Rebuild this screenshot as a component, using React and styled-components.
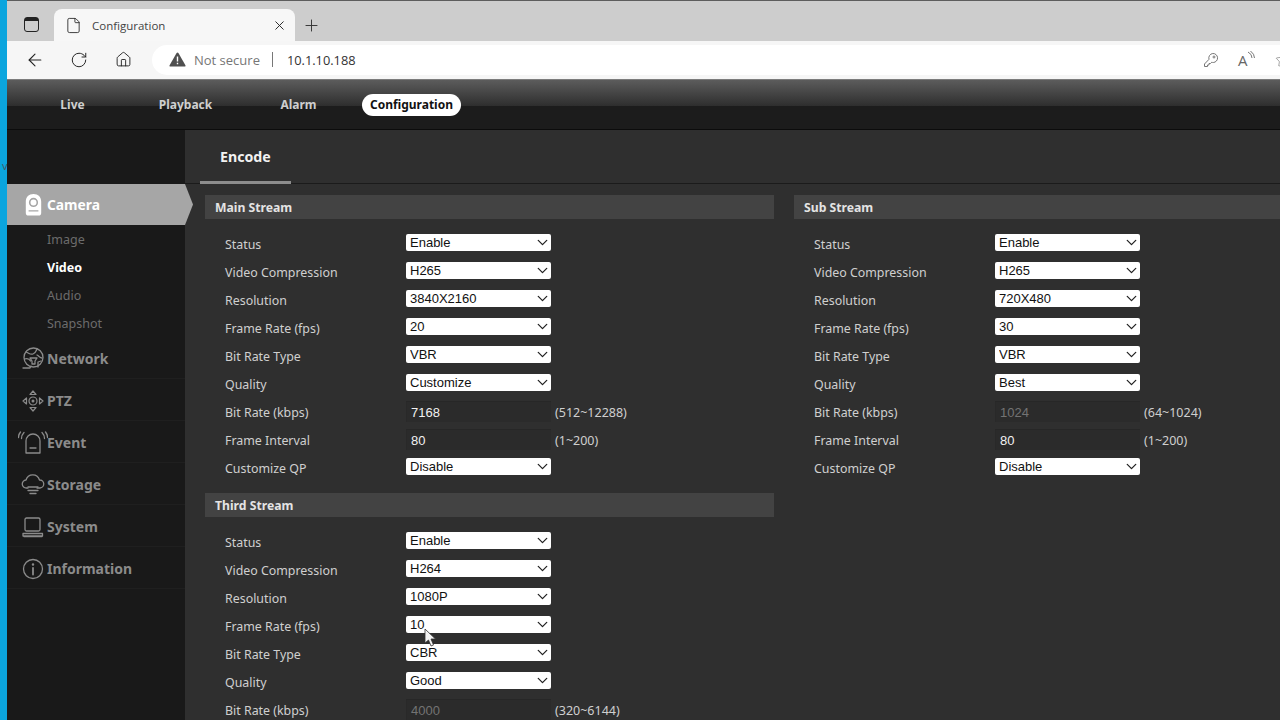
import React from "react";
import styled, { createGlobalStyle } from "styled-components";
import { ArrowLeft, RotateCw, Home, File, X, Plus, Star, ChevronDown } from "lucide-react";

const Global = createGlobalStyle`
  html, body { margin: 0; padding: 0; height: 720px; overflow: hidden; background: #2f2f2f; }
  #root { height: 720px; }
  * { box-sizing: border-box; }
`;

const ui = `"Noto Sans", "Open Sans", sans-serif`;

const Page = styled.div`
  position: relative;
  display: flex;
  width: 1280px;
  height: 720px;
  overflow: hidden;
  font-family: ${ui};
`;
const Strip = styled.div`
  position: relative;
  flex: 0 0 7px;
  background: #0ba5de;
`;
const StripMark = styled.span`
  position: absolute;
  left: 2px;
  top: 158px;
  font-size: 11px;
  color: #3d5d6b;
`;
const Main = styled.div`
  flex: 1;
  min-width: 0;
  display: flex;
  flex-direction: column;
`;
const TabStrip = styled.div`
  flex: 0 0 41px;
  display: flex;
  align-items: flex-end;
  background: #cdcdcd;
  border-top: 1px solid #5d5d5d;
  padding-left: 47px;
  position: relative;
`;
const TabActions = styled.div`
  position: absolute;
  left: 17px;
  top: 16px;
  width: 15px;
  height: 15px;
  border: 1.4px solid #222;
  border-radius: 3px;
  &::before {
    content: "";
    display: block;
    height: 3px;
    background: #222;
  }
`;
const Tab = styled.div`
  width: 241px;
  height: 32px;
  background: #f7f7f7;
  border-radius: 8px 8px 0 0;
  display: flex;
  align-items: center;
  padding: 0 8px 0 11px;
  color: #444;
  font-size: 11.5px;
  font-family: "Open Sans", sans-serif;
  svg { flex: none; }
`;
const TabTitle = styled.span`
  flex: 1;
  margin-left: 10px;
`;
const NewTab = styled.div`
  margin-left: 7px;
  height: 32px;
  display: flex;
  align-items: center;
  color: #333;
`;
const Toolbar = styled.div`
  flex: 0 0 39px;
  display: flex;
  align-items: center;
  background: #f6f6f6;
  border-bottom: 1px solid #7c7c7c;
  padding: 0 0 1px 6px;
`;
const ToolButton = styled.div`
  flex: 0 0 44px;
  display: flex;
  align-items: center;
  justify-content: center;
  color: #222;
`;
const Address = styled.div`
  flex: 1;
  height: 30px;
  margin-left: 7px;
  background: #fff;
  border-radius: 15px 0 0 15px;
  display: flex;
  align-items: center;
  padding-left: 17px;
  position: relative;
  font-family: "Open Sans", sans-serif;
  font-size: 13px;
`;
const NotSecure = styled.span`
  color: #767676;
  margin-left: 8px;
`;
const Divider = styled.span`
  width: 1px;
  height: 15px;
  background: #777;
  margin: 0 14px 0 12px;
`;
const Url = styled.span`
  color: #333;
  font-size: 12.8px;
`;
const RightIcons = styled.div`
  position: absolute;
  left: 1051px;
  top: 0;
  height: 30px;
  display: flex;
  align-items: center;
  gap: 19px;
  color: #777;
`;
const ReadAloud = styled.div`
  position: relative;
  width: 18px;
  font-size: 15px;
  line-height: 30px;
  color: #666;
  svg { position: absolute; left: 9px; top: 6px; }
`;
const Nav = styled.nav`
  flex: 0 0 50px;
  display: flex;
  align-items: center;
  padding: 0 0 0 9px;
  background: linear-gradient(#5c5c5c 0, #2f2f2f 52%, #1c1c1c 54%, #1c1c1c 100%);
  border-bottom: 1px solid #0c0c0c;
`;
const NavItem = styled.div`
  width: 113px;
  display: flex;
  justify-content: center;
`;
const NavLabel = styled.span`
  height: 22px;
  line-height: 22px;
  padding: 0 8px;
  border-radius: 11px;
  font-size: 12px;
  font-weight: 700;
  color: ${(p) => (p.$active ? "#111" : "#cfcfcf")};
  background: ${(p) => (p.$active ? "#fff" : "transparent")};
`;
const Body = styled.div`
  flex: 1;
  min-height: 0;
  display: flex;
`;
const Sidebar = styled.aside`
  flex: 0 0 178px;
  width: 178px;
  min-width: 0;
  background: #191919;
  padding-top: 54px;
  position: relative;
  z-index: 1;
`;
const ActiveGroup = styled.div`
  width: 186px;
  height: 41px;
  background: #a6a6a6;
  clip-path: polygon(0 0, 178px 0, 186px 50%, 178px 100%, 0 100%);
  display: flex;
  align-items: center;
  padding-left: 12px;
  color: #fff;
  font-size: 13.8px;
  font-weight: 700;
`;
const GroupIcon = styled.span`
  flex: 0 0 28px;
  min-width: 0;
  display: flex;
  align-items: center;
  justify-content: center;
  svg { flex: none; }
`;
const SubList = styled.div`
  padding: 0 0 0 40px;
`;
const SubItem = styled.div`
  height: 28px;
  line-height: 30px;
  font-size: 12.5px;
  color: ${(p) => (p.$active ? "#fff" : "#6c6c6c")};
  font-weight: ${(p) => (p.$active ? 700 : 400)};
`;
const Group = styled.div`
  height: 42px;
  display: flex;
  align-items: center;
  padding: 2px 0 0 12px;
  color: #8b8b8b;
  font-size: 14px;
  font-weight: 700;
  border-bottom: 1px solid #1f1f1f;
`;
const Content = styled.main`
  flex: 1;
  min-width: 0;
  background: #2f2f2f;
  overflow: hidden;
`;
const TabBar = styled.div`
  height: 54px;
  padding-left: 15px;
  border-bottom: 1px solid #1b1b1b;
  display: flex;
`;
const EncodeTab = styled.div`
  width: 91px;
  height: 54px;
  padding: 16px 0 0 20px;
  border-bottom: 3px solid #8d8d8d;
  color: #f2f2f2;
  font-size: 14.2px;
  font-weight: 700;
  line-height: 22px;
`;
const Columns = styled.div`
  display: grid;
  grid-template-columns: 569px 569px;
  column-gap: 20px;
  padding: 11px 0 0 20px;
  align-items: start;
`;
const Stream = styled.section`
  margin-bottom: 12px;
`;
const StreamHeader = styled.h3`
  margin: 0 0 10px;
  height: 24px;
  line-height: 26px;
  padding-left: 10px;
  background: #434343;
  color: #e4e4e4;
  font-size: 12.2px;
  font-weight: 700;
`;
const Row = styled.div`
  height: 28px;
  display: flex;
  align-items: center;
`;
const Label = styled.label`
  flex: 0 0 201px;
  padding: 4px 0 0 20px;
  color: #cfcfcf;
  font-size: 12.4px;
  line-height: 16px;
`;
const SelectBox = styled.div`
  position: relative;
  width: 145px;
  height: 17px;
  margin-bottom: 2px;
  svg {
    position: absolute;
    right: 0;
    top: 0;
    pointer-events: none;
    color: #222;
  }
`;
const Select = styled.select`
  appearance: none;
  display: block;
  width: 100%;
  height: 100%;
  padding: 0 0 0 4px;
  border: none;
  border-radius: 2px;
  background-color: #fff;
  color: #111;
  font-family: "Liberation Sans", Arial, sans-serif;
  font-size: 13px;
  outline: none;
`;
const Input = styled.input`
  width: 145px;
  height: 21px;
  margin-top: 1px;
  padding: 0 4px;
  border: none;
  border-top: 1px solid #272727;
  border-left: 1px solid #292929;
  background: #2b2b2b;
  color: ${(p) => (p.disabled ? "#737373" : "#f1f1f1")};
  font-family: "Liberation Sans", Arial, sans-serif;
  font-size: 13px;
  outline: none;
`;
const Hint = styled.span`
  margin-left: 4px;
  color: #cfcfcf;
  font-size: 12.5px;
  line-height: 16px;
  padding-top: 3px;
`;
const Cursor = styled.svg`
  position: absolute;
  left: 424px;
  top: 628px;
  z-index: 2;
`;

const Svg = ({ children, w = 24, h = 24 }) => (
  <svg width={w} height={h} viewBox="0 0 24 24" fill="none" stroke="currentColor" strokeWidth="1.3" strokeLinecap="round" strokeLinejoin="round">
    {children}
  </svg>
);

const icons = {
  Camera: (
    <svg width="17" height="22" viewBox="0 0 17 22">
      <path fillRule="evenodd" fill="#fff" d="M8.500 0C3.800 0 .8 3 .8 7.500V19c0 1.600 1 2.600 2.600 2.600h10.200c1.600 0 2.600-1 2.600-2.600V7.500C16.200 3 13.200 0 8.500 0zM8.500 3.800a4.600 4.600 0 1 1 0 9.200 4.600 4.600 0 0 1 0-9.200zM8.500 5.400a3 3 0 1 0 0 6 3 3 0 0 0 0-6zM3.600 16.200h9.800v1.200H3.600z" />
    </svg>
  ),
  Network: (
    <Svg>
      <circle cx="12.500" cy="10.500" r="9.500" />
      <path d="M5 5c3 1 4 3 7 2s3-3 4-5M3.500 12c3-1 5 0 6 2M9 11h7l-2 3v3h-3v-3zM16 8c2 1 3 3 5 3M17 20v-5l3-1M2 21h7l1-2" />
    </Svg>
  ),
  PTZ: (
    <svg width="22" height="22" viewBox="0 0 22 22" fill="none" stroke="currentColor" strokeWidth="1.2" strokeLinejoin="round">
      <circle cx="11" cy="11" r="4" />
      <circle cx="11" cy="11" r="1.500" fill="currentColor" stroke="none" />
      <path d="M11 1l3 3.500H8zM11 21l3-3.500H8zM1 11l3.500-3v6zM21 11l-3.500-3v6z" />
    </svg>
  ),
  Event: (
    <svg width="30" height="24" viewBox="0 0 30 24" fill="none" stroke="currentColor" strokeWidth="1.3" strokeLinecap="round" strokeLinejoin="round">
      <path d="M8 22V10a7 7 0 0 1 14 0v12zM12 17h6" />
      <path d="M6 1.500Q3.500 4 3.500 7.500M2.500 1Q.5 3.500.5 6.500M24 1.500q2.500 2.500 2.500 6M27.500 1q2 2.500 2 5.500" />
    </svg>
  ),
  Storage: (
    <Svg>
      <path d="M7 15H5.500a4 4 0 0 1-.5-8 7 7 0 0 1 13.500 0 4 4 0 0 1 .5 8H16" />
      <path d="M7 14h10M7 17.500h10M9 20.500h6" />
    </Svg>
  ),
  System: (
    <Svg>
      <rect x="4" y="3" width="15" height="13" rx="1.500" />
      <path d="M2 21v-2.500h19.500V21zM3 21.500h18" />
    </Svg>
  ),
  Information: (
    <Svg>
      <circle cx="12" cy="12" r="9.500" />
      <path d="M12 11v6.500" strokeWidth="1.800" />
      <circle cx="12" cy="7.500" r=".6" />
    </Svg>
  ),
};

const Key = () => (
  <svg width="16" height="16" viewBox="0 0 16 16" fill="none" stroke="currentColor" strokeWidth="1">
    <path d="M9.800 1.500a4.500 4.500 0 0 1 .5 9 3 3 0 0 1-1.500-.3L7.500 11.500H6v1.500H4.500v1.500h-3V12L6 7.300a4.500 4.500 0 0 1 3.800-5.800z" />
    <circle cx="11" cy="5" r="1" />
  </svg>
);

const Warning = () => (
  <svg width="17" height="15" viewBox="0 0 17 15">
    <path fill="#4f4f4f" d="M8.500.5c.4 0 .7.2.9.5l7 12.200c.4.700 0 1.300-.8 1.300H1.400c-.8 0-1.200-.6-.8-1.300L7.600 1c.2-.3.500-.5.900-.5z" />
    <path fill="#fff" d="M7.800 4.500h1.400v5H7.800zM7.800 10.800h1.400v1.400H7.800z" />
  </svg>
);

const S = (value) => ({ type: "select", value });
const I = (value, hint, disabled) => ({ type: "input", value, hint, disabled });

const labels = ["Status", "Video Compression", "Resolution", "Frame Rate (fps)", "Bit Rate Type", "Quality", "Bit Rate (kbps)", "Frame Interval", "Customize QP"];

const mainVals = [S("Enable"), S("H265"), S("3840X2160"), S("20"), S("VBR"), S("Customize"), I("7168", "(512~12288)"), I("80", "(1~200)"), S("Disable")];
const subVals = [S("Enable"), S("H265"), S("720X480"), S("30"), S("VBR"), S("Best"), I("1024", "(64~1024)", true), I("80", "(1~200)"), S("Disable")];
const thirdVals = [S("Enable"), S("H264"), S("1080P"), S("10"), S("CBR"), S("Good"), I("4000", "(320~6144)", true)];

const StreamBlock = ({ title, values }) => (
  <Stream>
    <StreamHeader>{title}</StreamHeader>
    {values.map((v, i) => (
      <Row key={labels[i]}>
        <Label>{labels[i]}</Label>
        {v.type === "select" ? (
          <SelectBox>
            <Select defaultValue={v.value}>
              <option>{v.value}</option>
            </Select>
            <ChevronDown size={17} strokeWidth={1.8} />
          </SelectBox>
        ) : (
          <>
            <Input defaultValue={v.value} disabled={v.disabled} />
            <Hint>{v.hint}</Hint>
          </>
        )}
      </Row>
    ))}
  </Stream>
);

export default function App() {
  return (
    <Page>
      <Global />
      <Strip>
        <StripMark>v</StripMark>
      </Strip>
      <Main>
        <TabStrip>
          <TabActions />
          <Tab>
            <File size={17} strokeWidth={1.2} color="#222" />
            <TabTitle>Configuration</TabTitle>
            <X size={15} strokeWidth={1.5} color="#222" />
          </Tab>
          <NewTab>
            <Plus size={19} strokeWidth={1.2} />
          </NewTab>
        </TabStrip>
        <Toolbar>
          <ToolButton><ArrowLeft size={20} strokeWidth={1.3} /></ToolButton>
          <ToolButton><RotateCw size={18} strokeWidth={1.3} /></ToolButton>
          <ToolButton><Home size={17} strokeWidth={1.3} /></ToolButton>
          <Address>
            <Warning />
            <NotSecure>Not secure</NotSecure>
            <Divider />
            <Url>10.1.10.188</Url>
            <RightIcons>
              <Key />
              <ReadAloud>
                A
                <svg width="10" height="12" viewBox="0 0 10 12" fill="none" stroke="#777" strokeWidth="1">
                  <path d="M1 1q4 2 4 6M3.500 0q4 3 4 7" />
                </svg>
              </ReadAloud>
              <Star size={16} strokeWidth={1} />
            </RightIcons>
          </Address>
        </Toolbar>
        <Nav>
          {["Live", "Playback", "Alarm", "Configuration"].map((n) => (
            <NavItem key={n}>
              <NavLabel $active={n === "Configuration"}>{n}</NavLabel>
            </NavItem>
          ))}
        </Nav>
        <Body>
          <Sidebar>
            <ActiveGroup>
              <GroupIcon>{icons.Camera}</GroupIcon>
              Camera
            </ActiveGroup>
            <SubList>
              <SubItem>Image</SubItem>
              <SubItem $active>Video</SubItem>
              <SubItem>Audio</SubItem>
              <SubItem>Snapshot</SubItem>
            </SubList>
            {["Network", "PTZ", "Event", "Storage", "System", "Information"].map((g) => (
              <Group key={g}>
                <GroupIcon>{icons[g]}</GroupIcon>
                {g}
              </Group>
            ))}
          </Sidebar>
          <Content>
            <TabBar>
              <EncodeTab>Encode</EncodeTab>
            </TabBar>
            <Columns>
              <div>
                <StreamBlock title="Main Stream" values={mainVals} />
                <StreamBlock title="Third Stream" values={thirdVals} />
              </div>
              <div>
                <StreamBlock title="Sub Stream" values={subVals} />
              </div>
            </Columns>
          </Content>
        </Body>
      </Main>
      <Cursor width="13" height="20" viewBox="0 0 13 20">
        <path d="M1 1v14l3.500-3 2.500 6 2.500-1-2.500-6h4.500z" fill="#f4f4f4" stroke="#333" strokeWidth="0.8" />
      </Cursor>
    </Page>
  );
}
